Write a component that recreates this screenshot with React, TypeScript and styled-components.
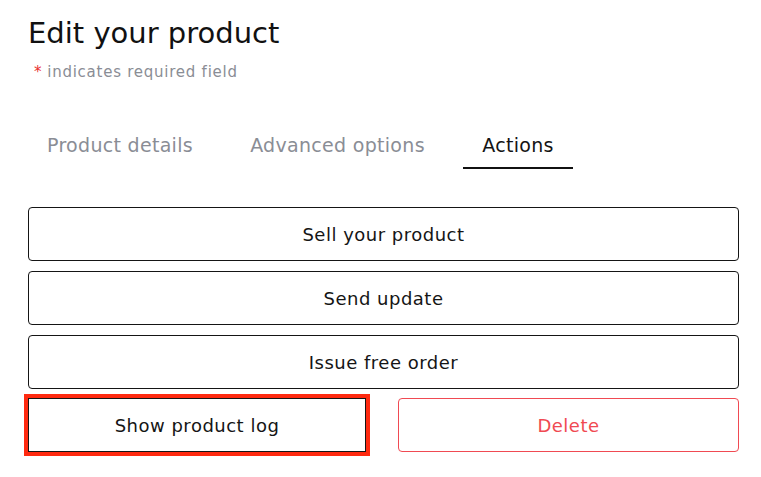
import * as React from 'react';
import styled, { createGlobalStyle } from 'styled-components';

const GlobalStyle = createGlobalStyle`
    html, body {
        margin: 0;
        padding: 0;
        background: #ffffff;
    }
    body {
        font-family: 'DejaVu Sans', 'Noto Sans', sans-serif;
        color: #141414;
    }
`;

const Page = styled.div`
    width: 761px;
    height: 477px;
    box-sizing: border-box;
    padding: 14px 22px 0 28px;
`;

const Title = styled.h1`
    margin: 0;
    font-size: 29px;
    line-height: 38px;
    font-weight: 400;
    color: #111111;
`;

const RequiredNote = styled.p`
    margin: 11px 0 0 6px;
    font-size: 15px;
    line-height: 18px;
    letter-spacing: 0.75px;
    color: #8a8d95;
`;

const Asterisk = styled.span`
    color: #e8312f;
    margin-right: 5px;
`;

const Tabs = styled.div`
    display: flex;
    gap: 19px;
    margin-top: 43px;
`;

const Tab = styled.button<{ active?: boolean; width: number }>`
    width: ${(p) => p.width}px;
    height: 45px;
    padding: 0 0 2px;
    border: 0;
    border-bottom: 2px solid ${(p) => (p.active ? '#111111' : 'transparent')};
    background: none;
    font-family: inherit;
    font-size: 19px;
    letter-spacing: 0.3px;
    color: ${(p) => (p.active ? '#141414' : '#8a8d95')};
    cursor: pointer;
`;

const ActionList = styled.div`
    display: flex;
    flex-direction: column;
    gap: 10px;
    margin-top: 38px;
`;

const ActionButton = styled.button<{ danger?: boolean; highlighted?: boolean }>`
    height: 54px;
    width: 100%;
    border: 1px solid ${(p) => (p.danger ? '#f04a52' : '#151515')};
    border-radius: 4px;
    background: #ffffff;
    font-family: inherit;
    font-size: 18px;
    letter-spacing: 0.5px;
    color: ${(p) => (p.danger ? '#f04a52' : '#151515')};
    cursor: pointer;
    ${(p) =>
        p.highlighted &&
        `
        border-radius: 0;
        outline: 4px solid #ff2a10;
        outline-offset: 0;
    `}
`;

const ButtonRow = styled.div`
    display: grid;
    grid-template-columns: 338px 341px;
    column-gap: 32px;
    margin-top: -1px;
`;

const App: React.FC = () => {
    return (
        <>
            <GlobalStyle />
            <Page>
                <Title>Edit your product</Title>
                <RequiredNote>
                    <Asterisk>*</Asterisk>indicates required field
                </RequiredNote>
                <Tabs>
                    <Tab width={184}>Product details</Tab>
                    <Tab width={213}>Advanced options</Tab>
                    <Tab width={110} active>
                        Actions
                    </Tab>
                </Tabs>
                <ActionList>
                    <ActionButton>Sell your product</ActionButton>
                    <ActionButton>Send update</ActionButton>
                    <ActionButton>Issue free order</ActionButton>
                    <ButtonRow>
                        <ActionButton highlighted>Show product log</ActionButton>
                        <ActionButton danger>Delete</ActionButton>
                    </ButtonRow>
                </ActionList>
            </Page>
        </>
    );
};

export default App;
